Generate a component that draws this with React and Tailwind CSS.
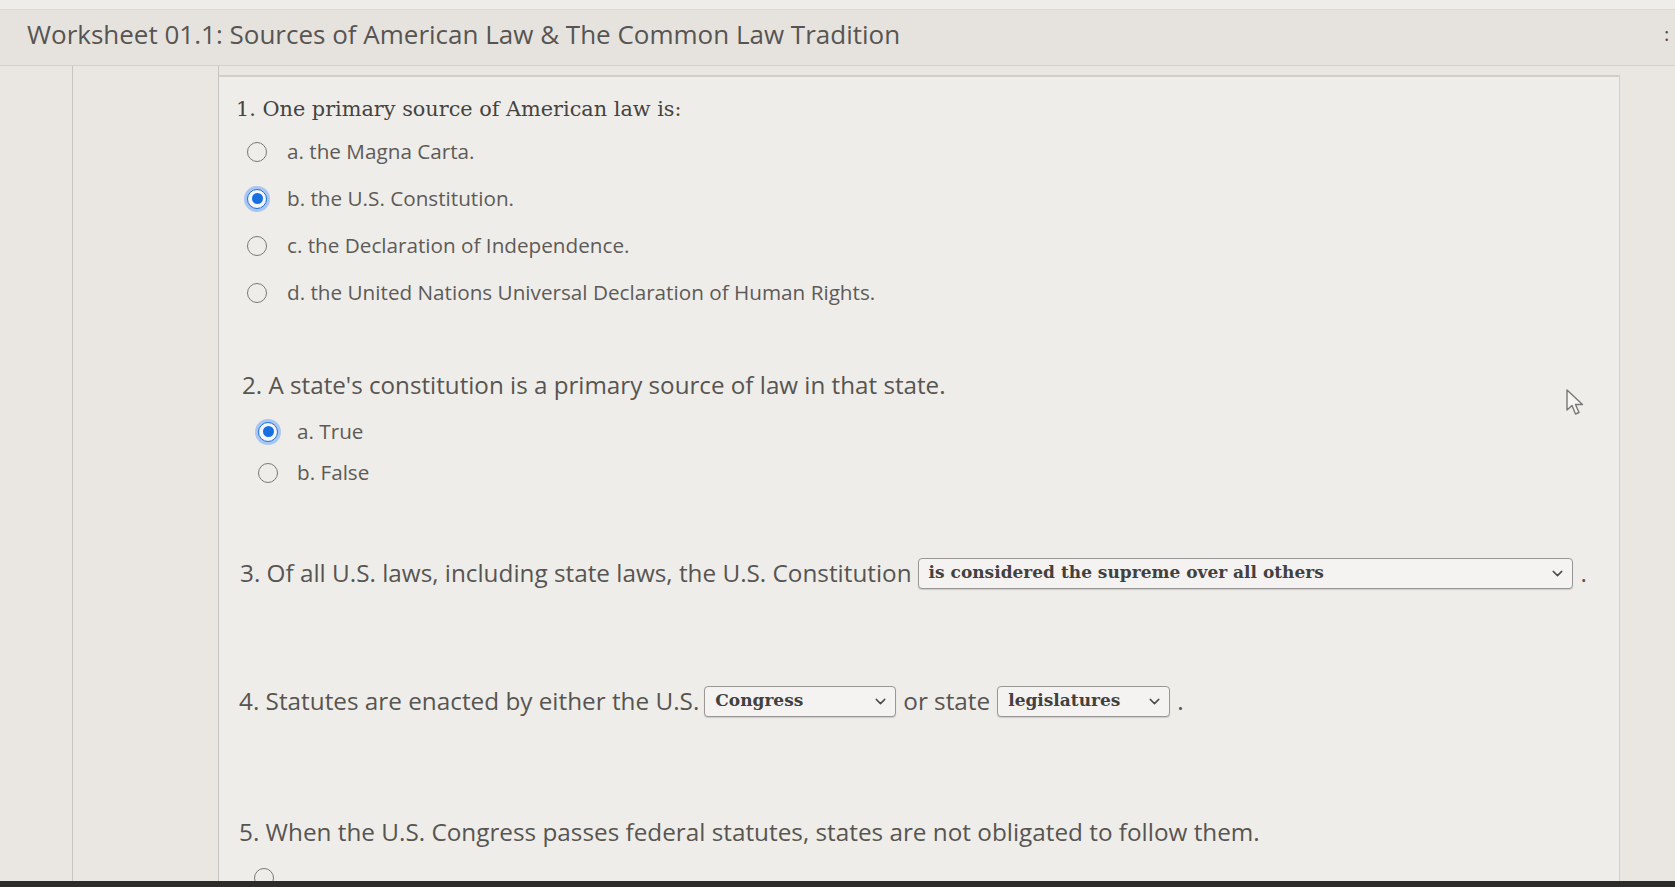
import React, { useState } from "react";
import { ChevronDown } from "lucide-react";

const sans = { fontFamily: '"Open Sans", "Noto Sans", sans-serif' };
const serif = { fontFamily: '"DejaVu Serif", Georgia, serif' };
const selectFont = { fontFamily: '"DejaVu Serif", Georgia, serif' };

const Radio = ({ checked, onClick }) => (
  <button
    onClick={onClick}
    className={`flex h-[20px] w-[20px] shrink-0 items-center justify-center rounded-full border-[1.5px] ${
      checked
        ? "border-[#1a6fe0] bg-[#f4f6fb] ring-[3px] ring-[#a9c6f2]"
        : "border-[#7b7977] bg-transparent"
    }`}
  >
    {checked && <span className="h-[11px] w-[11px] rounded-full bg-[#1a6fe0]" />}
  </button>
);

const Option = ({ label, checked, onClick, rowClass }) => (
  <div className={`flex items-center ${rowClass}`}>
    <Radio checked={checked} onClick={onClick} />
    <span className="text-[20.7px] text-[#5d5b58]" style={sans}>
      {label}
    </span>
  </div>
);

const Dropdown = ({ value, width }) => (
  <div
    className={`flex h-[31px] ${width} shrink-0 items-center justify-between rounded-[4px] border border-[#9a9896] bg-[#f4f3f1] pl-[10px] pr-[6px] shadow-[0_1px_1px_rgba(0,0,0,0.15)]`}
  >
    <span className="text-[17px] font-bold text-[#42413f]" style={selectFont}>
      {value}
    </span>
    <ChevronDown size={17} strokeWidth={2} className="text-[#4a4946]" />
  </div>
);

export default function App() {
  const [q1, setQ1] = useState("b");
  const [q2, setQ2] = useState("a");

  const q1Options = [
    ["a", "a. the Magna Carta."],
    ["b", "b. the U.S. Constitution."],
    ["c", "c. the Declaration of Independence."],
    ["d", "d. the United Nations Universal Declaration of Human Rights."],
  ];

  return (
    <div className="relative flex h-[887px] w-[1675px] flex-col overflow-hidden bg-[#eae7e2]">
      {/* title bar */}
      <div className="h-[10px] shrink-0 border-b border-[#dcd9d5] bg-[#efedea]" />
      <div className="flex h-[56px] shrink-0 items-center justify-between border-b border-[#d3d0cb] bg-[#e6e3df] pb-[7px] pl-[27px] pr-[6px]">
        <h1 className="text-[26px] text-[#575552]" style={sans}>
          Worksheet 01.1: Sources of American Law &amp; The Common Law Tradition
        </h1>
        <span className="text-[18px] leading-none text-[#4a4845]">:</span>
      </div>

      <div className="flex min-h-0 flex-1 overflow-hidden">
        <div className="w-[73px] shrink-0 border-r border-[#c7c4bf]" />
        <div className="w-[146px] shrink-0 border-r border-[#c7c4bf]" />

        {/* question card */}
        <div className="mt-[9px] flex w-[1401px] shrink-0 flex-col border-t-2 border-r border-[#d2cfca] bg-[#efede9] pl-[17px]">
          <div className="mt-[18px] flex h-[30px] shrink-0 items-center text-[20.8px] text-[#454340]" style={serif}>
            1. One primary source of American law is:
          </div>
          <div className="mt-[3px] shrink-0 pl-[11px]">
            {q1Options.map(([key, label]) => (
              <Option
                key={key}
                label={label}
                checked={q1 === key}
                onClick={() => setQ1(key)}
                rowClass="h-[47px] gap-[20px]"
              />
            ))}
          </div>

          <div className="mt-[54px] flex h-[30px] shrink-0 items-center pl-[6px] text-[24.2px] text-[#575552]" style={sans}>
            2. A state's constitution is a primary source of law in that state.
          </div>
          <div className="mt-[11px] shrink-0 pl-[22px]">
            <Option label="a. True" checked={q2 === "a"} onClick={() => setQ2("a")} rowClass="h-[41px] gap-[19px]" />
            <Option label="b. False" checked={q2 === "b"} onClick={() => setQ2("b")} rowClass="h-[41px] gap-[19px]" />
          </div>

          <div className="mt-[62px] flex h-[36px] shrink-0 items-center pl-[4px] text-[24.3px] text-[#575552]" style={sans}>
            <span>3. Of all U.S. laws, including state laws, the U.S. Constitution</span>
            <div className="ml-[6px]">
              <Dropdown value="is considered the supreme over all others" width="w-[655px]" />
            </div>
            <span className="ml-[8px]">.</span>
          </div>

          <div className="mt-[92px] flex h-[36px] shrink-0 items-center pl-[3px] text-[24.3px] text-[#575552]" style={sans}>
            <span>4. Statutes are enacted by either the U.S.</span>
            <div className="ml-[5px]">
              <Dropdown value="Congress" width="w-[192px]" />
            </div>
            <span className="ml-[7px]">or state</span>
            <div className="ml-[7px]">
              <Dropdown value="legislatures" width="w-[173px]" />
            </div>
            <span className="ml-[7px]">.</span>
          </div>

          <div className="mt-[98px] flex h-[30px] shrink-0 items-center pl-[3px] text-[24.3px] text-[#575552]" style={sans}>
            5. When the U.S. Congress passes federal statutes, states are not obligated to follow them.
          </div>
          <div className="mt-[21px] shrink-0 pl-[18px]">
            <Radio checked={false} />
          </div>
        </div>

        <div className="flex-1" />
      </div>

      <div className="h-[6px] shrink-0 bg-[#2e2c2a]" />

      {/* mouse pointer */}
      <svg
        className="absolute left-[1565px] top-[388px]"
        width="24"
        height="30"
        viewBox="0 0 24 30"
      >
        <path
          d="M2 2 L2 22 L7 17.5 L10.5 26 L14 24.5 L10.5 16.5 L17.5 16.5 Z"
          fill="#f6f5f3"
          stroke="#7a7875"
          strokeWidth="1.4"
          strokeLinejoin="round"
        />
      </svg>
    </div>
  );
}
